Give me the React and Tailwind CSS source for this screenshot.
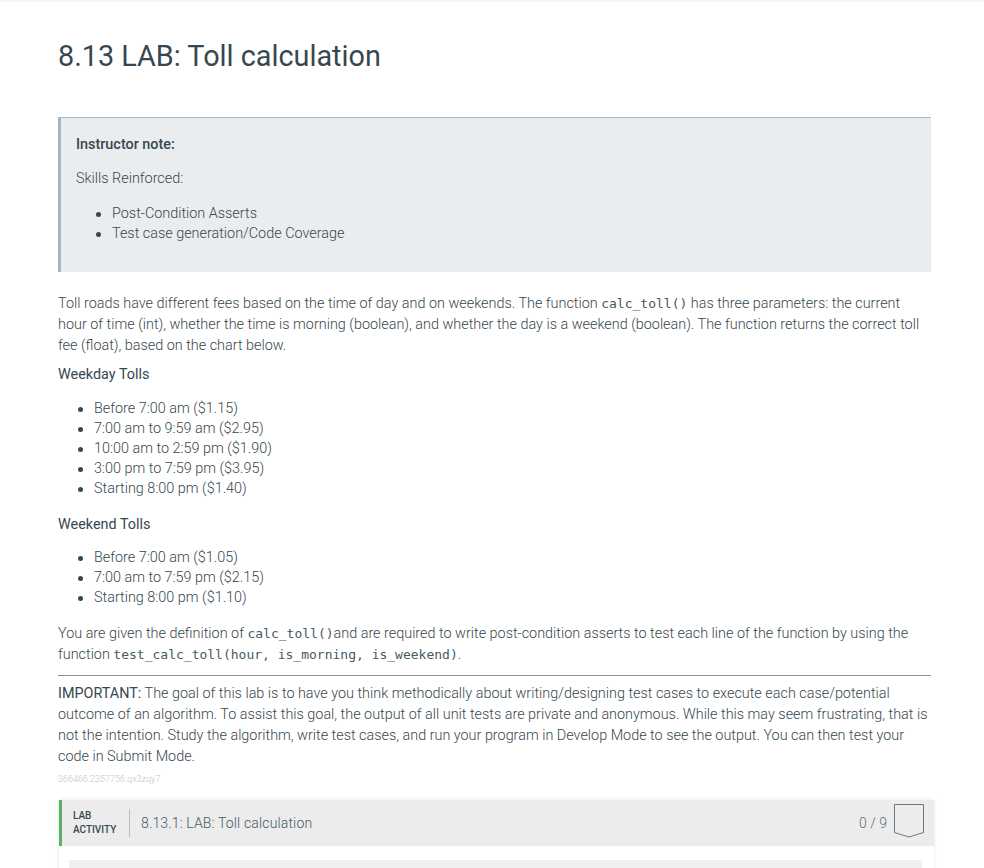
import React from 'react';

const Code = ({ children }) => (
  <code className="font-['DejaVu_Sans_Mono','Liberation_Mono',monospace] text-[13px] font-normal text-[#455a64]">{children}</code>
);

const Bullets = ({ items }) => (
  <ul className="pl-5 leading-5">
    {items.map((item) => (
      <li key={item} className="flex items-center gap-[11px]">
        <span className="w-[5px] h-[5px] rounded-full bg-[#37474f]" />
        {item}
      </li>
    ))}
  </ul>
);

export default function App() {
  return (
    <div className="h-[868px] overflow-hidden bg-white font-['Roboto',sans-serif] text-[14.4px] font-light text-[#37474f]">
      <div className="h-[2px] bg-gray-100" />
      <main className="w-[873px] ml-[58px]">
        <h1 className="mt-[36px] mb-[43px] text-[28.8px] leading-9 font-normal text-[#37474f]">8.13 LAB: Toll calculation</h1>

        {/* Instructor note */}
        <div className="h-[155px] bg-[#eaedef] border-l-[3px] border-t border-[#a9b6c0] pl-[15px] pt-[17px]">
          <p className="font-medium leading-5">Instructor note:</p>
          <p className="mt-[14px] mb-[15px] leading-5">Skills Reinforced:</p>
          <Bullets items={['Post-Condition Asserts', 'Test case generation/Code Coverage']} />
        </div>

        <p className="mt-[21px] leading-[21px]">
          Toll roads have different fees based on the time of day and on weekends. The function <Code>calc_toll()</Code> has three parameters: the current hour of time (int), whether the time is morning (boolean), and whether the day is a weekend (boolean). The function returns the correct toll fee (float), based on the chart below.
        </p>

        <p className="mt-[9px] mb-[14px] leading-5 font-normal">Weekday Tolls</p>
        <Bullets items={['Before 7:00 am ($1.15)', '7:00 am to 9:59 am ($2.95)', '10:00 am to 2:59 pm ($1.90)', '3:00 pm to 7:59 pm ($3.95)', 'Starting 8:00 pm ($1.40)']} />

        <p className="mt-[16px] mb-[13px] leading-5 font-normal">Weekend Tolls</p>
        <Bullets items={['Before 7:00 am ($1.05)', '7:00 am to 7:59 pm ($2.15)', 'Starting 8:00 pm ($1.10)']} />

        <p className="mt-[15px] leading-[21px]">
          You are given the definition of <Code>calc_toll()</Code>and are required to write post-condition asserts to test each line of the function by using the function <Code>test_calc_toll(hour, is_morning, is_weekend)</Code>.
        </p>

        <hr className="mt-[10px] border-t border-[#8f8f8f]" />

        <p className="mt-[7px] leading-[21px]">
          <span className="font-normal">IMPORTANT:</span> The goal of this lab is to have you think methodically about writing/designing test cases to execute each case/potential outcome of an algorithm. To assist this goal, the output of all unit tests are private and anonymous. While this may seem frustrating, that is not the intention. Study the algorithm, write test cases, and run your program in Develop Mode to see the output. You can then test your code in Submit Mode.
        </p>

        <p className="mt-[6px] text-[9px] leading-3 text-[#c4c4c4]">366466.2357756.qx3zqy7</p>

        {/* Lab activity card */}
        <section className="w-[875px] ml-px mt-[15px] bg-white shadow-[0_0_4px_rgba(0,0,0,0.1)]">
          <header className="h-[46px] flex items-center bg-[#ececec] border-l-[3px] border-[#5cb35f]">
            <div className="w-[67px] pl-[11px] text-[10px] leading-[14px] font-medium text-[#37474f]">
              <div>LAB</div>
              <div>ACTIVITY</div>
            </div>
            <div className="h-7 border-l border-[#bdbdbd]" />
            <span className="ml-[11px] text-sm leading-5 tracking-[0.15px] text-[#455a64]">8.13.1: LAB: Toll calculation</span>
            <span className="ml-auto text-sm text-[#546e7a]">0 / 9</span>
            <svg className="ml-[7px] mr-[10px] mb-1" width="30" height="34" viewBox="0 0 30 34" fill="none">
              <path d="M0.5 0.5H29.5V28.5L15 33L0.5 28.5Z" stroke="#757575" strokeWidth="1" />
            </svg>
          </header>
          <div className="pl-[10px] pr-[12px] pt-[14px]">
            <div className="h-10 bg-[#f0f0f0]" />
          </div>
        </section>
      </main>
    </div>
  );
}
